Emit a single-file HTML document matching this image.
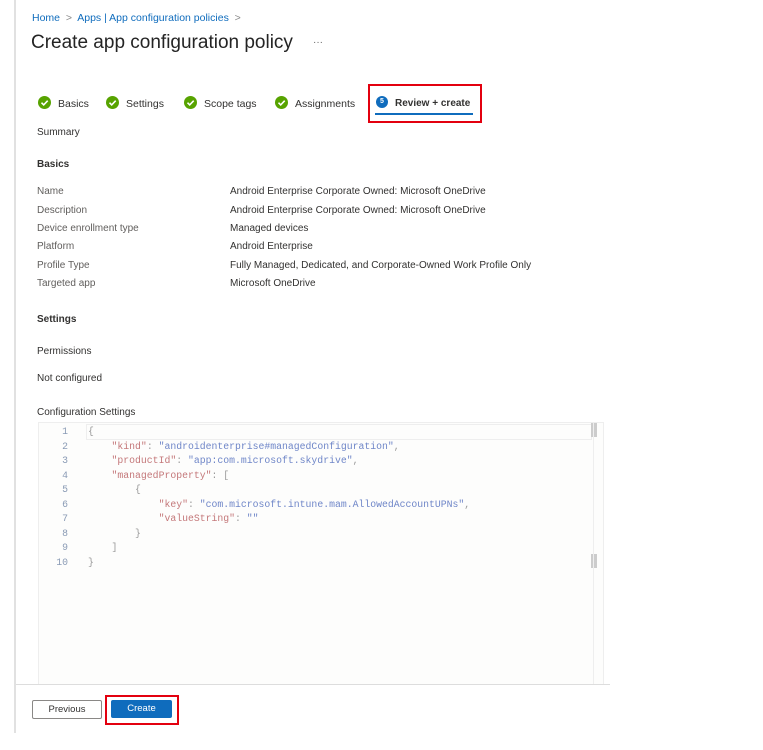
<!DOCTYPE html>
<html><head><style>
body{margin:0;width:763px;height:750px;background:#fff;font-family:"Liberation Sans",sans-serif;position:relative;overflow:hidden;color:#323130}
.a{position:absolute;white-space:nowrap}
.s{font-size:10px}
.l{color:#605e5c}
.b{font-weight:bold;font-size:10px;color:#323130}
.chk{position:absolute;width:13px;height:13px;border-radius:50%;background:#57a300;top:96px}
.chk svg{position:absolute;left:0;top:0}
.tab{position:absolute;top:98px;font-size:10.5px;color:#323130}
.code{position:absolute;font-family:"Liberation Mono",monospace;font-size:9.8px;line-height:14.5px;white-space:pre}
.k{color:#c4787a}.v{color:#6f86c8}.p{color:#9a9a9a}
</style></head><body>
<div class="a" style="left:14px;top:0;width:2px;height:733px;background:#e1e1e1"></div>
<div class="a" style="left:32px;top:12px;font-size:10.5px;color:#0f6cbd">Home <span style="color:#888">&nbsp;&gt;&nbsp;</span> Apps | App configuration policies <span style="color:#888">&nbsp;&gt;</span></div>
<div class="a" style="left:31px;top:32px;font-size:19px;color:#242424">Create app configuration policy</div>
<div class="a" style="left:313px;top:37px;font-size:10px;color:#666">···</div>

<div class="chk" style="left:38px"><svg width="13" height="13"><path d="M3.5 6.7l2.2 2.2 4-4.2" stroke="#fff" stroke-width="1.6" fill="none"/></svg></div>
<div class="tab" style="left:58px">Basics</div>
<div class="chk" style="left:106px"><svg width="13" height="13"><path d="M3.5 6.7l2.2 2.2 4-4.2" stroke="#fff" stroke-width="1.6" fill="none"/></svg></div>
<div class="tab" style="left:126px">Settings</div>
<div class="chk" style="left:184px"><svg width="13" height="13"><path d="M3.5 6.7l2.2 2.2 4-4.2" stroke="#fff" stroke-width="1.6" fill="none"/></svg></div>
<div class="tab" style="left:204px">Scope tags</div>
<div class="chk" style="left:275px"><svg width="13" height="13"><path d="M3.5 6.7l2.2 2.2 4-4.2" stroke="#fff" stroke-width="1.6" fill="none"/></svg></div>
<div class="tab" style="left:295px">Assignments</div>
<div class="a" style="left:376px;top:96px;width:12px;height:12px;border-radius:50%;background:#0f6cbd;color:#fff;font-size:7px;font-weight:bold;text-align:center;line-height:12px">5</div>
<div class="tab" style="left:395px;font-weight:bold;font-size:10px;top:98px">Review + create</div>
<div class="a" style="left:375px;top:113px;width:98px;height:2px;background:#0f6cbd"></div>
<div class="a" style="left:368px;top:84px;width:110px;height:35px;border:2px solid #e3000f"></div>

<div class="a b" style="left:37px;top:127px;font-weight:normal">Summary</div>
<div class="a b" style="left:37px;top:159px">Basics</div>
<div class="a s l" style="left:37px;top:186px">Name</div>
<div class="a s l" style="left:37px;top:205px">Description</div>
<div class="a s l" style="left:37px;top:223px">Device enrollment type</div>
<div class="a s l" style="left:37px;top:241px">Platform</div>
<div class="a s l" style="left:37px;top:260px">Profile Type</div>
<div class="a s l" style="left:37px;top:278px">Targeted app</div>
<div class="a s" style="left:230px;top:186px">Android Enterprise Corporate Owned: Microsoft OneDrive</div>
<div class="a s" style="left:230px;top:205px">Android Enterprise Corporate Owned: Microsoft OneDrive</div>
<div class="a s" style="left:230px;top:223px">Managed devices</div>
<div class="a s" style="left:230px;top:241px">Android Enterprise</div>
<div class="a s" style="left:230px;top:260px">Fully Managed, Dedicated, and Corporate-Owned Work Profile Only</div>
<div class="a s" style="left:230px;top:278px">Microsoft OneDrive</div>
<div class="a b" style="left:37px;top:314px">Settings</div>
<div class="a s" style="left:37px;top:346px">Permissions</div>
<div class="a s" style="left:37px;top:373px">Not configured</div>
<div class="a s" style="left:37px;top:407px">Configuration Settings</div>

<div class="a" style="left:38px;top:422px;width:564px;height:262px;background:#fdfdfc;border:1px solid #eee;border-bottom:none"></div>
<div class="a" style="left:86px;top:424px;width:504px;height:14px;border:1px solid #eee"></div>
<div class="a" style="left:591px;top:423px;width:6px;height:14px;background:#ccc"></div>
<div class="a" style="left:591px;top:554px;width:6px;height:14px;background:#ccc"></div>
<div class="a" style="left:593px;top:422px;width:1px;height:262px;background:#eee"></div>
<div class="code" style="left:44px;top:425px;color:#8a9bb5;text-align:right;width:24px">1
2
3
4
5
6
7
8
9
10</div>
<div class="code p" style="left:88px;top:425px">{
    <span class="k">"kind"</span>: <span class="v">"androidenterprise#managedConfiguration"</span>,
    <span class="k">"productId"</span>: <span class="v">"app:com.microsoft.skydrive"</span>,
    <span class="k">"managedProperty"</span>: [
        {
            <span class="k">"key"</span>: <span class="v">"com.microsoft.intune.mam.AllowedAccountUPNs"</span>,
            <span class="k">"valueString"</span>: <span class="v">""</span>
        }
    ]
}</div>

<div class="a" style="left:16px;top:684px;width:594px;height:1px;background:#ddd"></div>
<div class="a" style="left:32px;top:700px;width:68px;height:17px;border:1px solid #8a8886;border-radius:2px;font-size:9.5px;text-align:center;line-height:17px;color:#323130">Previous</div>
<div class="a" style="left:111px;top:700px;width:61px;height:18px;background:#0f6cbd;border-radius:2px;font-size:9.5px;text-align:center;line-height:18px;color:#fff">Create</div>
<div class="a" style="left:105px;top:695px;width:70px;height:26px;border:2px solid #e3000f"></div>
</body></html>
